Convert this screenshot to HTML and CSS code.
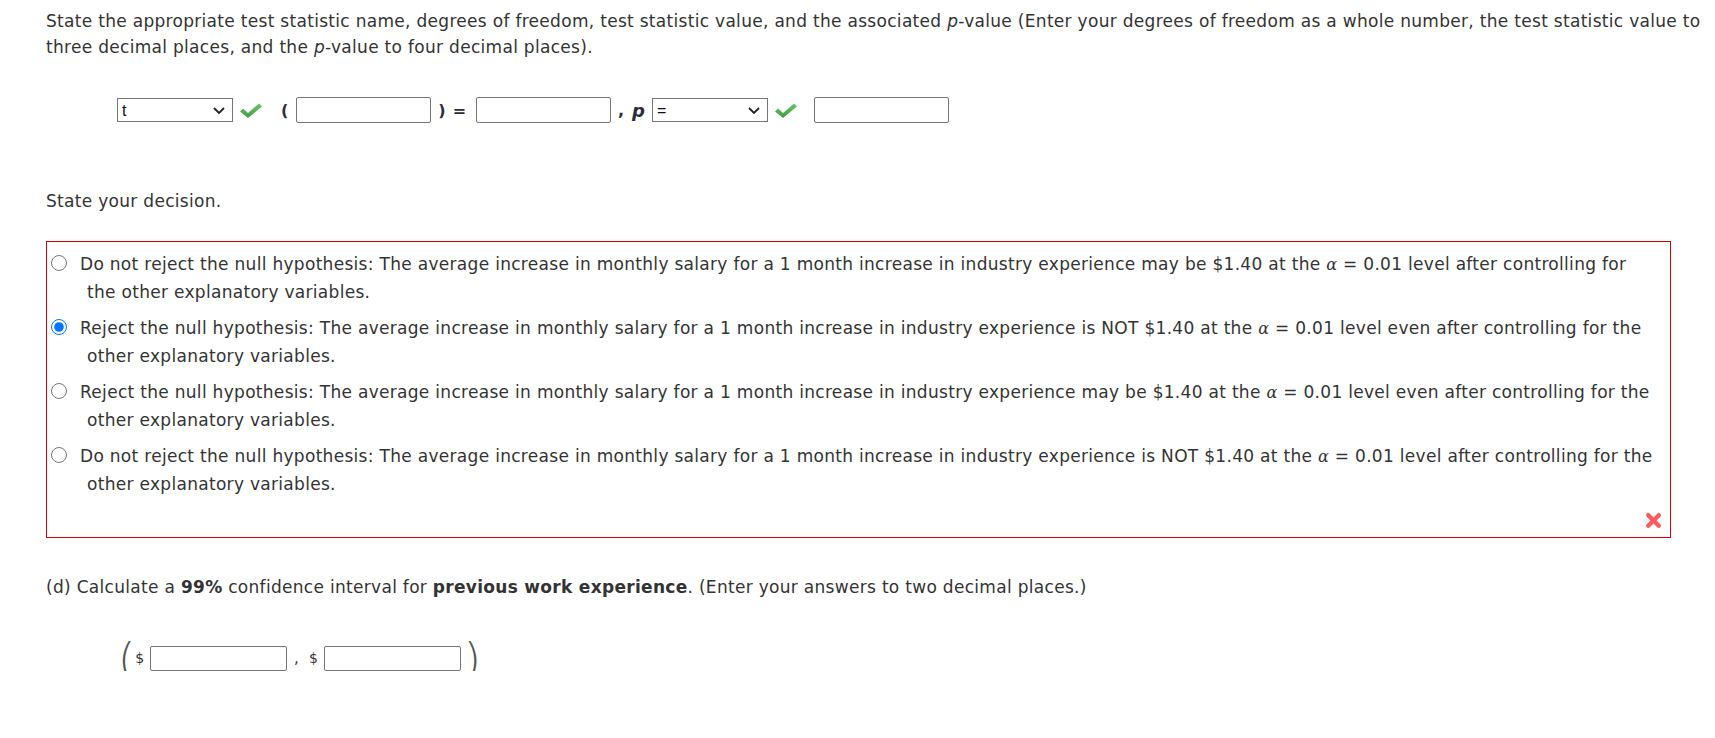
FILE: index.html
```html
<!DOCTYPE html>
<html>
<head>
<meta charset="utf-8">
<link rel="stylesheet" href="styles.css">
</head>
<body>
<div class="page">
  <p class="intro">State the appropriate test statistic name, degrees of freedom, test statistic value, and the associated <i>p</i>-value (Enter your degrees of freedom as a whole number, the test statistic value to three decimal places, and the <i>p</i>-value to four decimal places).</p>

  <div class="answer-row">
    <span class="sel sel-stat">
      <select><option>t</option></select>
      <svg class="chev" viewBox="0 0 12 7" width="12" height="7"><path d="M1 1 L6 6 L11 1" fill="none" stroke="#222" stroke-width="1.8"/></svg>
    </span>
    <svg class="check" viewBox="0 0 22 15" width="22" height="15"><defs><linearGradient id="g1" x1="0" y1="0" x2="0" y2="1"><stop offset="0" stop-color="#6cc46c"/><stop offset="1" stop-color="#3f9e3f"/></linearGradient></defs><polygon points="0,8.5 3,5.5 8,10 19,0.5 22,3.5 8,15" fill="url(#g1)"/></svg>
    <span class="sym open">(</span>
    <input class="field" type="text">
    <span class="sym close">)</span>
    <span class="sym eq">=</span>
    <input class="field" type="text">
    <span class="sym comma">,</span>
    <span class="sym pvar">p</span>
    <span class="sel sel-rel">
      <select><option>=</option></select>
      <svg class="chev" viewBox="0 0 12 7" width="12" height="7"><path d="M1 1 L6 6 L11 1" fill="none" stroke="#222" stroke-width="1.8"/></svg>
    </span>
    <svg class="check" viewBox="0 0 22 15" width="22" height="15"><defs><linearGradient id="g2" x1="0" y1="0" x2="0" y2="1"><stop offset="0" stop-color="#6cc46c"/><stop offset="1" stop-color="#3f9e3f"/></linearGradient></defs><polygon points="0,8.5 3,5.5 8,10 19,0.5 22,3.5 8,15" fill="url(#g2)"/></svg>
    <input class="field pval" type="text">
  </div>

  <p class="prompt decision">State your decision.</p>

  <div class="choices">
    <label class="opt"><input type="radio" name="dec">Do not reject the null hypothesis: The average increase in monthly salary for a 1 month increase in industry experience may be $1.40 at the <i class="math">α</i> = 0.01 level after controlling for the other explanatory variables.</label>
    <label class="opt"><input type="radio" name="dec" checked>Reject the null hypothesis: The average increase in monthly salary for a 1 month increase in industry experience is NOT $1.40 at the <i class="math">α</i> = 0.01 level even after controlling for the other explanatory variables.</label>
    <label class="opt"><input type="radio" name="dec">Reject the null hypothesis: The average increase in monthly salary for a 1 month increase in industry experience may be $1.40 at the <i class="math">α</i> = 0.01 level even after controlling for the other explanatory variables.</label>
    <label class="opt"><input type="radio" name="dec">Do not reject the null hypothesis: The average increase in monthly salary for a 1 month increase in industry experience is NOT $1.40 at the <i class="math">α</i> = 0.01 level after controlling for the other explanatory variables.</label>
    <div class="mark-row">
      <svg class="xmark" viewBox="0 0 17 17" width="17" height="17"><path d="M3.2 3.2 L13.8 13.8 M13.8 3.2 L3.2 13.8" stroke="#ff5b5b" stroke-width="4.4" stroke-linecap="round"/></svg>
    </div>
  </div>

  <p class="prompt part-d">(d) Calculate a <b>99%</b> confidence interval for <b>previous work experience</b>. (Enter your answers to two decimal places.)</p>

  <div class="interval">
    <span class="bigparen">(</span>
    <span class="dollar">$</span>
    <input class="field ci" type="text">
    <span class="ci-comma">,</span>
    <span class="dollar d2">$</span>
    <input class="field ci" type="text">
    <span class="bigparen close-big">)</span>
  </div>
</div>
</body>
</html>
```

FILE: styles.css
```css
html, body {
  margin: 0;
  padding: 0;
  background: #fff;
}

body {
  font-family: "DejaVu Sans", Verdana, sans-serif;
  font-size: 17px;
  letter-spacing: 0.3px;
  color: #333;
}

.page {
  padding: 8px 4px 0 46px;
}

.intro {
  margin: 0;
  line-height: 26px;
}

.answer-row {
  display: flex;
  align-items: center;
  height: 26px;
  margin-top: 37px;
  letter-spacing: 0;
}

.sel {
  position: relative;
  display: inline-block;
  height: 24px;
}

.sel select {
  appearance: none;
  -webkit-appearance: none;
  box-sizing: border-box;
  height: 24px;
  width: 100%;
  border: 1px solid #767676;
  border-radius: 0;
  background: #fff;
  margin: 0;
  padding: 0 0 0 4px;
  font-family: "Liberation Sans", Arial, sans-serif;
  font-size: 16px;
  color: #111;
}

.sel .chev {
  position: absolute;
  right: 8px;
  top: 9px;
  pointer-events: none;
}

.sel-stat {
  width: 116px;
  margin-left: 71px;
}

.sel-rel {
  width: 116px;
  margin-left: 7px;
}

.check {
  margin-left: 7px;
  flex: none;
}

.field {
  box-sizing: border-box;
  height: 26px;
  width: 135px;
  border: 1px solid #767676;
  border-radius: 2px;
  margin: 0;
  padding: 0 4px;
  background: #fff;
  font-family: "DejaVu Sans", Verdana, sans-serif;
  font-size: 14px;
}

.sym {
  font-weight: bold;
  font-size: 16px;
  color: #2b2b3a;
}

.open {
  margin-left: 19px;
  margin-right: 8px;
}

.close {
  margin-left: 7px;
}

.eq {
  margin-left: 7px;
  margin-right: 10px;
}

.comma {
  margin-left: 7px;
}

.pvar {
  font-style: italic;
  font-size: 18px;
  margin-left: 8px;
}

.pval {
  margin-left: 17px;
}

.prompt {
  margin: 0;
  line-height: 26px;
}

.decision {
  margin-top: 65px;
}

.choices {
  margin-top: 27px;
  margin-right: 40px;
  border: 1px solid #d40000;
  padding: 8px 10px 8px 0;
}

.opt {
  display: block;
  line-height: 28px;
  padding-left: 40px;
  text-indent: -36px;
  margin-bottom: 8px;
}

.opt:last-of-type {
  margin-bottom: 0;
}

.opt input {
  width: 16px;
  height: 16px;
  margin: 0 13px 0 0;
  vertical-align: middle;
  position: relative;
  top: -2px;
}

.math {
  font-family: "DejaVu Serif", "Liberation Serif", serif;
  font-style: italic;
  font-size: 16px;
  line-height: 1;
}

.mark-row {
  display: flex;
  justify-content: flex-end;
  margin-top: 14px;
}

.xmark {
  display: block;
  margin-right: -2px;
}

.part-d {
  margin-top: 36px;
}

.interval {
  display: flex;
  align-items: center;
  height: 26px;
  margin-top: 45px;
  letter-spacing: 0;
}

.bigparen {
  font-family: "DejaVu Sans", sans-serif;
  font-weight: 200;
  font-size: 44px;
  line-height: 26px;
  color: #555;
  margin-left: 72px;
  position: relative;
  top: 2px;
}

.close-big {
  margin-left: 3px;
}

.dollar {
  font-size: 14px;
  color: #333;
  margin-left: 0;
  margin-right: 6px;
}

.d2 {
  margin-left: 10px;
}

.ci {
  width: 137px;
  height: 25px;
}

.ci-comma {
  margin-left: 7px;
  font-size: 15px;
}
```
